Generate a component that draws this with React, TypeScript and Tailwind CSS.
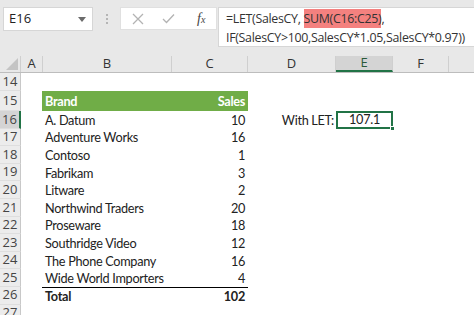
import React from "react";

const ROWS: { n: number; brand?: string; sales?: string; kind?: "head" | "total" }[] = [
  { n: 14 },
  { n: 15, brand: "Brand", sales: "Sales", kind: "head" },
  { n: 16, brand: "A. Datum", sales: "10" },
  { n: 17, brand: "Adventure Works", sales: "16" },
  { n: 18, brand: "Contoso", sales: "1" },
  { n: 19, brand: "Fabrikam", sales: "3" },
  { n: 20, brand: "Litware", sales: "2" },
  { n: 21, brand: "Northwind Traders", sales: "20" },
  { n: 22, brand: "Proseware", sales: "18" },
  { n: 23, brand: "Southridge Video", sales: "12" },
  { n: 24, brand: "The Phone Company", sales: "16" },
  { n: 25, brand: "Wide World Importers", sales: "4" },
  { n: 26, brand: "Total", sales: "102", kind: "total" },
  { n: 27 },
];

function ColHead({ label, w, active }: { label: string; w: string; active?: boolean }) {
  return (
    <div
      className={`${w} shrink-0 h-full flex items-center justify-center border-r border-[#cfcfcf] ${
        active ? "bg-[#d4d4d4] border-b-2 border-b-[#217346] text-[#2a5a3a]" : ""
      }`}
    >
      {label}
    </div>
  );
}

export default function App() {
  return (
    <div className="w-[474px] h-[315px] overflow-hidden bg-white font-['Lato',sans-serif] text-[#222]">
      {/* Formula bar */}
      <div className="h-[56px] bg-[#e8e8e8] flex items-start pt-[7px] pl-[3px]">
        <div className="w-[90px] shrink-0 h-[24px] bg-white border border-[#d6d6d6] flex items-center justify-between pl-[5px] pr-[6px] text-[13px] font-['Open_Sans',sans-serif]">
          <span>E16</span>
          <svg width="8" height="5" viewBox="0 0 8 5">
            <path d="M0 0 L8 0 L4 5 Z" fill="#6b6b6b" />
          </svg>
        </div>
        <div className="w-[27px] shrink-0 h-[24px] flex flex-col items-center justify-center gap-[2px]">
          <span className="w-[2px] h-[2px] bg-[#b5b5b5]" />
          <span className="w-[2px] h-[2px] bg-[#b5b5b5]" />
          <span className="w-[2px] h-[2px] bg-[#b5b5b5]" />
        </div>
        <div className="w-[97px] shrink-0 h-[23px] bg-white border border-[#e0e0e0] flex items-center pl-[11px] gap-[18px]">
          <svg width="12" height="12" viewBox="0 0 12 12">
            <path d="M1 1 L11 11 M11 1 L1 11" stroke="#b3b3b3" strokeWidth="1.3" />
          </svg>
          <svg width="13" height="11" viewBox="0 0 13 11">
            <path d="M1 6 L4.5 9.5 L12 1.5" stroke="#b3b3b3" strokeWidth="1.3" fill="none" />
          </svg>
          <span className="ml-[4px] font-['Liberation_Serif',serif] italic text-[14px] text-[#444]">
            f<span className="text-[10px]">x</span>
          </span>
        </div>
        <div className="ml-[1px] flex-1 min-w-0 h-[40px] bg-white border border-[#d6d6d6] border-r-0 pl-[7px] pt-[1px] text-[12.4px] leading-[19px] whitespace-nowrap font-['Open_Sans',sans-serif] tracking-[-0.3px] text-[#333]">
          <div>
            =LET(SalesCY, <span className="bg-[#f4817f] py-[1px]">SUM(C16:C25)</span>,
          </div>
          <div>IF(SalesCY&gt;100,SalesCY*1.05,SalesCY*0.97))</div>
        </div>
      </div>

      {/* Column headers */}
      <div className="h-[17px] flex bg-[#e8e8e8] border-b border-[#bdbdbd] text-[13px] text-[#333] font-['Open_Sans',sans-serif]">
        <div className="w-[21px] shrink-0 h-full flex items-end justify-end pr-[2px] pb-[2px] border-r border-[#cfcfcf]">
          <svg width="12" height="12" viewBox="0 0 12 12">
            <path d="M12 0 L12 12 L0 12 Z" fill="#c4c4c4" />
          </svg>
        </div>
        <ColHead label="A" w="w-[22px]" />
        <ColHead label="B" w="w-[129px]" />
        <ColHead label="C" w="w-[76px]" />
        <ColHead label="D" w="w-[88px]" />
        <ColHead label="E" w="w-[57px]" active />
        <ColHead label="F" w="w-[56px]" />
        <div className="flex-1" />
      </div>

      {/* Grid */}
      <div className="flex flex-col">
        {ROWS.map((r) => {
          const h = r.n === 14 ? "h-[18px]" : r.n === 15 ? "h-[20px]" : "h-[17.6px]";
          const sel = r.n === 16;
          return (
            <div key={r.n} className={`${h} flex shrink-0`}>
              <div
                className={`w-[21px] shrink-0 h-full flex items-center justify-center text-[13px] font-['Open_Sans',sans-serif] text-[#444] border-b border-[#dedede] ${
                  sel ? "bg-[#d4d4d4] border-r-2 border-r-[#217346] text-[#2a5a3a]" : "bg-[#ececec] border-r border-r-[#c8c8c8]"
                }`}
              >
                {r.n}
              </div>
              <div className="w-[21px] shrink-0" />
              {r.brand ? (
                <div
                  className={`w-[206px] shrink-0 h-full flex items-center justify-between pl-[3px] pr-[3px] pt-[1px] text-[12.7px] tracking-[-0.3px] ${
                    r.kind === "head"
                      ? "bg-[#70ad47] text-white font-bold"
                      : r.kind === "total"
                      ? "border-t-[1.5px] border-black font-bold"
                      : ""
                  }`}
                >
                  <span>{r.brand}</span>
                  <span>{r.sales}</span>
                </div>
              ) : (
                <div className="w-[206px] shrink-0" />
              )}
              {sel && (
                <>
                  <div className="w-[88px] shrink-0 h-full flex items-center justify-end pr-[2px] pt-[1px] text-[12.7px] tracking-[-0.3px]">
                    With LET:
                  </div>
                  <div className="w-[57px] shrink-0 h-full relative border-2 border-[#217346] flex items-center justify-center text-[12.7px] tracking-[-0.3px]">
                    107.1
                    <span className="absolute -right-[4px] -bottom-[4px] w-[5px] h-[5px] bg-[#217346] border border-white" />
                  </div>
                </>
              )}
            </div>
          );
        })}
      </div>
    </div>
  );
}
